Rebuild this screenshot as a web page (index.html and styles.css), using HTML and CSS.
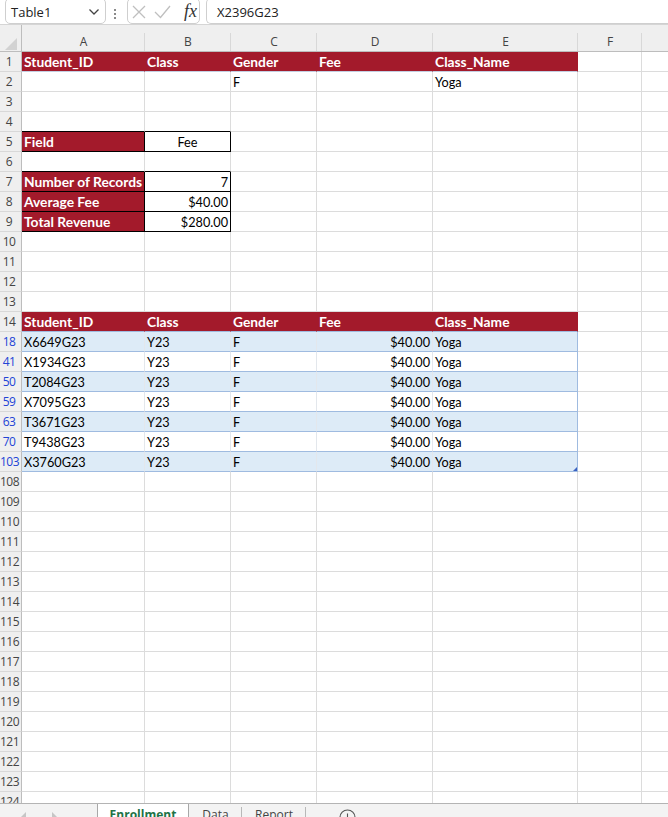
FILE: index.html
```html
<!DOCTYPE html>
<html>
<head>
<meta charset="utf-8">
<title>Enrollment</title>
<link rel="stylesheet" href="styles.css">
</head>
<body>
<div class="fbar">
  <div class="namebox"><span>Table1</span>
    <svg class="chev" width="12" height="8" viewBox="0 0 12 8"><polyline points="1.5,1.5 6,6 10.5,1.5" fill="none" stroke="#444" stroke-width="1.3"/></svg>
  </div>
  <div class="dots"><i></i><i></i><i></i></div>
  <div class="fxbox">
    <svg class="xc" width="46" height="26" viewBox="0 0 46 26"><path d="M6 8 L18 20 M18 8 L6 20" stroke="#bfbfbf" stroke-width="1.3" fill="none"/><polyline points="28,14 33.5,19.5 43,8" fill="none" stroke="#bfbfbf" stroke-width="1.3"/></svg>
    <span class="fx">fx</span>
  </div>
  <div class="formula">X2396G23</div>
</div>

<div class="sheet">
  <div class="cols">
    <div class="corner"><svg width="22" height="26" viewBox="0 0 22 26"><polygon points="5,25 17,25 17,13" fill="#d2d2d2"/></svg></div>
    <div>A</div><div>B</div><div>C</div><div>D</div><div>E</div><div>F</div><div></div>
  </div>

  <div class="r"><div class="h">1</div><div class="m t1">Student_ID</div><div class="m t1">Class</div><div class="m t1">Gender</div><div class="m t1">Fee</div><div class="m t1">Class_Name</div><div></div><div></div></div>
  <div class="r"><div class="h">2</div><div></div><div></div><div>F</div><div></div><div>Yoga</div><div></div><div></div></div>
  <div class="r"><div class="h">3</div><div></div><div></div><div></div><div></div><div></div><div></div><div></div></div>
  <div class="r"><div class="h">4</div><div class="bt"></div><div class="bt"></div><div></div><div></div><div></div><div></div><div></div></div>
  <div class="r"><div class="h">5</div><div class="mb">Field</div><div class="bx ct">Fee</div><div></div><div></div><div></div><div></div><div></div></div>
  <div class="r"><div class="h">6</div><div class="bt"></div><div class="bt"></div><div></div><div></div><div></div><div></div><div></div></div>
  <div class="r"><div class="h">7</div><div class="mb">Number of Records</div><div class="bx rt">7</div><div></div><div></div><div></div><div></div><div></div></div>
  <div class="r"><div class="h">8</div><div class="mb">Average Fee</div><div class="bx rt">$40.00</div><div></div><div></div><div></div><div></div><div></div></div>
  <div class="r"><div class="h">9</div><div class="mb">Total Revenue</div><div class="bx rt">$280.00</div><div></div><div></div><div></div><div></div><div></div></div>
  <div class="r"><div class="h">10</div><div></div><div></div><div></div><div></div><div></div><div></div><div></div></div>
  <div class="r"><div class="h">11</div><div></div><div></div><div></div><div></div><div></div><div></div><div></div></div>
  <div class="r"><div class="h">12</div><div></div><div></div><div></div><div></div><div></div><div></div><div></div></div>
  <div class="r"><div class="h">13</div><div></div><div></div><div></div><div></div><div></div><div></div><div></div></div>
  <div class="r"><div class="h">14</div><div class="m tb">Student_ID</div><div class="m tb">Class</div><div class="m tb">Gender</div><div class="m tb">Fee</div><div class="m tb">Class_Name</div><div></div><div></div></div>

  <div class="r band"><div class="h f">18</div><div class="tb">X6649G23</div><div class="tb">Y23</div><div class="tb">F</div><div class="tb rt">$40.00</div><div class="tb te">Yoga</div><div></div><div></div></div>
  <div class="r"><div class="h f">41</div><div class="tb">X1934G23</div><div class="tb">Y23</div><div class="tb">F</div><div class="tb rt">$40.00</div><div class="tb te">Yoga</div><div></div><div></div></div>
  <div class="r band"><div class="h f">50</div><div class="tb">T2084G23</div><div class="tb">Y23</div><div class="tb">F</div><div class="tb rt">$40.00</div><div class="tb te">Yoga</div><div></div><div></div></div>
  <div class="r"><div class="h f">59</div><div class="tb">X7095G23</div><div class="tb">Y23</div><div class="tb">F</div><div class="tb rt">$40.00</div><div class="tb te">Yoga</div><div></div><div></div></div>
  <div class="r band"><div class="h f">63</div><div class="tb">T3671G23</div><div class="tb">Y23</div><div class="tb">F</div><div class="tb rt">$40.00</div><div class="tb te">Yoga</div><div></div><div></div></div>
  <div class="r"><div class="h f">70</div><div class="tb">T9438G23</div><div class="tb">Y23</div><div class="tb">F</div><div class="tb rt">$40.00</div><div class="tb te">Yoga</div><div></div><div></div></div>
  <div class="r band"><div class="h f">103</div><div class="tb">X3760G23</div><div class="tb">Y23</div><div class="tb">F</div><div class="tb rt">$40.00</div><div class="tb te handle">Yoga</div><div></div><div></div></div>

  <div class="r"><div class="h">108</div><div></div><div></div><div></div><div></div><div></div><div></div><div></div></div>
  <div class="r"><div class="h">109</div><div></div><div></div><div></div><div></div><div></div><div></div><div></div></div>
  <div class="r"><div class="h">110</div><div></div><div></div><div></div><div></div><div></div><div></div><div></div></div>
  <div class="r"><div class="h">111</div><div></div><div></div><div></div><div></div><div></div><div></div><div></div></div>
  <div class="r"><div class="h">112</div><div></div><div></div><div></div><div></div><div></div><div></div><div></div></div>
  <div class="r"><div class="h">113</div><div></div><div></div><div></div><div></div><div></div><div></div><div></div></div>
  <div class="r"><div class="h">114</div><div></div><div></div><div></div><div></div><div></div><div></div><div></div></div>
  <div class="r"><div class="h">115</div><div></div><div></div><div></div><div></div><div></div><div></div><div></div></div>
  <div class="r"><div class="h">116</div><div></div><div></div><div></div><div></div><div></div><div></div><div></div></div>
  <div class="r"><div class="h">117</div><div></div><div></div><div></div><div></div><div></div><div></div><div></div></div>
  <div class="r"><div class="h">118</div><div></div><div></div><div></div><div></div><div></div><div></div><div></div></div>
  <div class="r"><div class="h">119</div><div></div><div></div><div></div><div></div><div></div><div></div><div></div></div>
  <div class="r"><div class="h">120</div><div></div><div></div><div></div><div></div><div></div><div></div><div></div></div>
  <div class="r"><div class="h">121</div><div></div><div></div><div></div><div></div><div></div><div></div><div></div></div>
  <div class="r"><div class="h">122</div><div></div><div></div><div></div><div></div><div></div><div></div><div></div></div>
  <div class="r"><div class="h">123</div><div></div><div></div><div></div><div></div><div></div><div></div><div></div></div>
  <div class="r"><div class="h">124</div><div></div><div></div><div></div><div></div><div></div><div></div><div></div></div>
</div>

<div class="tabs">
  <div class="nav"><svg width="97" height="14" viewBox="0 0 97 14"><polygon points="26,8 20,14 26,20" fill="#c6c6c6"/><polygon points="52,8 58,14 52,20" fill="#c6c6c6"/></svg></div>
  <div class="tab active">Enrollment</div>
  <div class="tab t-data">Data</div>
  <div class="tab t-report">Report</div>
  <div class="plus"><svg width="17" height="17" viewBox="0 0 17 17"><circle cx="8.5" cy="8.5" r="7.5" fill="none" stroke="#555" stroke-width="1.1"/><path d="M8.5 4.5 V12.5 M4.5 8.5 H12.5" stroke="#555" stroke-width="1.1"/></svg></div>
</div>
</body>
</html>
```
FILE: styles.css
```css
* { box-sizing: border-box; }
html, body { margin: 0; padding: 0; }
body {
  width: 668px;
  height: 817px;
  overflow: hidden;
  background: #fff;
  font-family: "Open Sans", "Noto Sans", sans-serif;
  display: flex;
  flex-direction: column;
}

/* formula bar */
.fbar {
  height: 24px;
  flex: none;
  display: flex;
  align-items: flex-start;
}
.namebox {
  margin-left: 5px;
  margin-top: -2px;
  width: 101px;
  height: 26px;
  border: 1px solid #cfcfcf;
  border-radius: 5px;
  display: flex;
  align-items: center;
  justify-content: space-between;
  padding: 2px 5px 0 5px;
  font-size: 13px;
  color: #222;
  background: #fff;
}
.chev { margin-right: 0; margin-top: 0; }
.dots {
  width: 21px;
  height: 24px;
  display: flex;
  flex-direction: column;
  align-items: center;
  justify-content: center;
  gap: 2px;
  padding-top: 3px;
  padding-right: 3px;
}
.dots i {
  display: block;
  width: 2px;
  height: 2px;
  background: #8a8a8a;
}
.fxbox {
  margin-top: -2px;
  width: 73px;
  height: 26px;
  border: 1px solid #cfcfcf;
  border-radius: 5px;
  display: flex;
  align-items: center;
  background: #fff;
}
.xc { flex: none; margin-left: -1px; }
.fx {
  font-family: "Liberation Serif", "DejaVu Serif", serif;
  font-style: italic;
  font-size: 18px;
  color: #333;
  margin-left: 11px;
  margin-top: 0;
}
.formula {
  margin-left: 6px;
  margin-top: -2px;
  flex: 1;
  height: 26px;
  border: 1px solid #cfcfcf;
  border-right: none;
  border-radius: 5px 0 0 5px;
  padding: 2px 0 0 10px;
  display: flex;
  align-items: center;
  font-size: 13px;
  color: #222;
}

/* sheet */
.sheet {
  flex: 1;
  overflow: hidden;
  width: 668px;
}
.cols, .r {
  display: grid;
  grid-template-columns: 22px 123px 86px 86px 116px 145px 64px 60px;
  width: 702px;
}
.cols {
  height: 28px;
  background: #efefef;
  border-top: 1px solid #d5d5d5;
  border-bottom: 1px solid #bdbdbd;
}
.cols > div {
  font-size: 12px;
  color: #444;
  text-align: center;
  line-height: 14px;
  padding-top: 10px;
  background: linear-gradient(#d8d8d8, #d8d8d8) no-repeat right bottom / 1px 18px;
}
.cols > .corner {
  padding: 0;
  background: linear-gradient(#bdbdbd, #bdbdbd) no-repeat right bottom / 1px 26px;
}
.corner svg { display: block; }

.r { height: 20px; }
.r > div {
  height: 20px;
  border-right: 1px solid #dcdcdc;
  border-bottom: 1px solid #dcdcdc;
  padding: 1px 2px 0 2px;
  line-height: 18px;
  font-family: Lato, "Liberation Sans", sans-serif;
  font-size: 12.7px;
  color: #000;
  white-space: nowrap;
}
.r > .h {
  background: #efefef;
  border-right: 1px solid #bdbdbd;
  border-bottom: 1px solid #d8d8d8;
  font-family: "Open Sans", "Noto Sans", sans-serif;
  font-size: 12px;
  letter-spacing: -0.5px;
  color: #444;
  text-align: center;
  padding: 1px 3px 0 0;
  overflow: visible;
}
.r > .h.f { color: #2243d6; }

.r > .m {
  background: #a31a2b;
  border-right-color: #a31a2b;
  color: #fff;
  font-weight: 700;
  font-size: 13.8px;
}
.r > .t1 { border-bottom-color: #c3cfe2; }
.r > .mb {
  background: #a31a2b;
  color: #fff;
  font-weight: 700;
  font-size: 13.8px;
  border-right-color: #000;
  border-bottom-color: #000;
}
.r > .bx { border-right-color: #000; border-bottom-color: #000; }
.r > .bt { border-bottom-color: #000; }
.r > .rt { text-align: right; }
.r > .ct { text-align: center; }

.r > .tb {
  border-bottom-color: #9fbbe0;
  border-right-color: #e3e7ec;
}
.r > .m.tb { border-right-color: #a31a2b; }
.band > .tb { background: #ddebf7; }
.r > .te { border-right-color: #9fbbe0; }
.handle { position: relative; }
.handle::after {
  content: "";
  position: absolute;
  right: 0;
  bottom: 0;
  width: 4px;
  height: 4px;
  background: #3b62c2;
  clip-path: polygon(100% 0, 100% 100%, 0 100%);
}

/* sheet tabs */
.tabs {
  flex: none;
  height: 14px;
  border-top: 1px solid #b4b4b4;
  background: #f3f3f3;
  display: flex;
  overflow: hidden;
}
.nav { width: 97px; flex: none; }
.nav svg { display: block; }
.tab {
  flex: none;
  font-size: 12px;
  color: #444;
  text-align: center;
  padding-top: 3px;
  line-height: 16px;
  white-space: nowrap;
}
.tab.active {
  width: 92px;
  background: #fff;
  border-left: 1px solid #a8a8a8;
  border-right: 1px solid #a8a8a8;
  color: #217346;
  font-weight: 700;
}
.t-data {
  width: 53px;
  background: linear-gradient(#b8b8b8, #b8b8b8) no-repeat right 0 top 3px / 1px 20px;
}
.t-report {
  width: 64px;
  background: linear-gradient(#b8b8b8, #b8b8b8) no-repeat right 0 top 3px / 1px 20px;
}
.plus { margin-left: 33px; margin-top: 5px; flex: none; }
.plus svg { display: block; }
```
